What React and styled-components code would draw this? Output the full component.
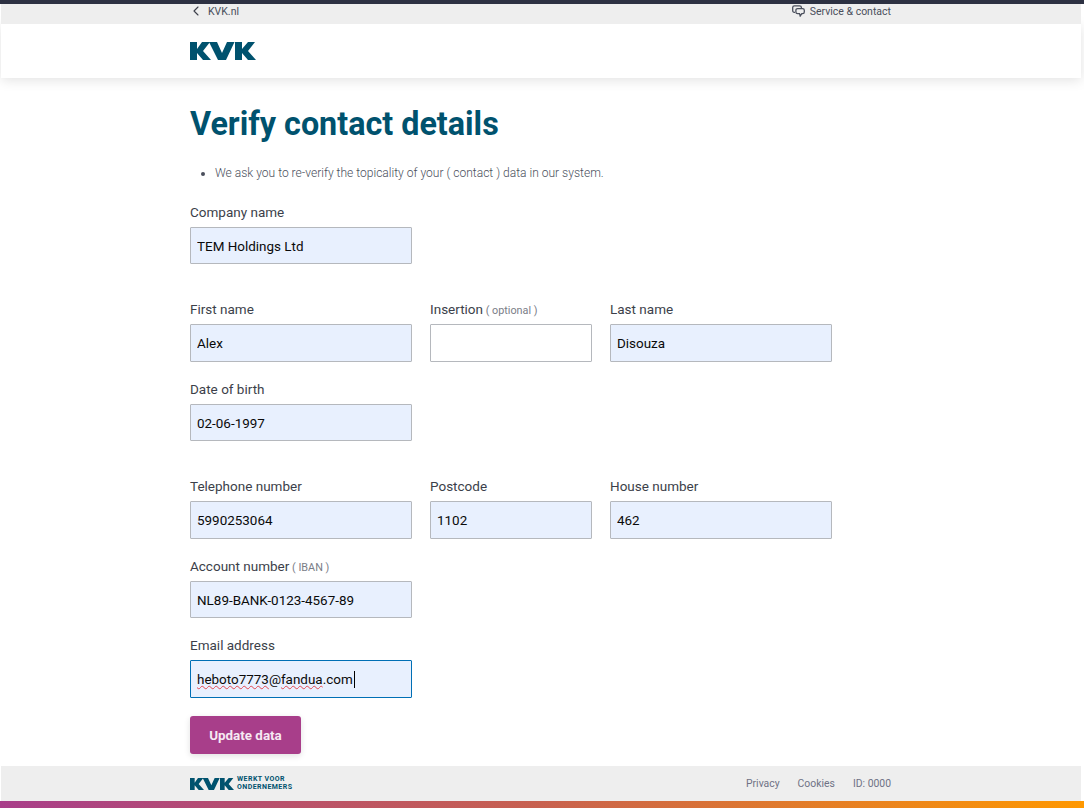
import React from 'react';
import styled, { createGlobalStyle } from 'styled-components';
import { ChevronLeft } from 'lucide-react';

const GlobalStyle = createGlobalStyle`
  html, body {
    margin: 0;
    padding: 0;
    height: 100%;
    background: #ffffff;
    font-family: Roboto, "Liberation Sans", sans-serif;
  }
  * {
    box-sizing: border-box;
  }
`;

const Page = styled.div`
  width: 1084px;
  height: 808px;
  overflow: hidden;
  display: flex;
  flex-direction: column;
  background: #ffffff;
`;

const DarkStrip = styled.div`
  height: 4px;
  background: #2d3142;
  flex: none;
`;

const Shell = styled.div`
  flex: 1;
  width: 1080px;
  margin-left: 1px;
  display: flex;
  flex-direction: column;
  min-height: 0;
`;

const Container = styled.div`
  width: 702px;
  margin: 0 auto;
  display: flex;
  align-items: center;
  justify-content: space-between;
`;

const TopBar = styled.div`
  height: 20px;
  background: #eeeeee;
  flex: none;
  position: relative;
  z-index: 1;
`;

const TopLink = styled.a`
  display: flex;
  align-items: center;
  height: 14px;
  font-size: 10.5px;
  color: #4a4f5c;
  text-decoration: none;
`;

const BackLink = styled(TopLink)`
  gap: 4px;
`;

const BackIcon = styled(ChevronLeft)`
  margin-left: -2px;
`;

const ServiceLink = styled(TopLink)`
  gap: 5px;
  margin-right: 1px;
`;

const Header = styled.header`
  height: 54px;
  background: #ffffff;
  flex: none;
  display: flex;
  align-items: center;
  box-shadow: 0 2px 12px rgba(0, 0, 0, 0.12);
`;

const Main = styled.main`
  flex: 1;
  min-height: 0;
`;

const Content = styled.div`
  width: 702px;
  margin: 0 auto;
  padding-top: 25px;
`;

const Title = styled.h1`
  margin: 0;
  font-family: Roboto, sans-serif;
  font-size: 32.3px;
  line-height: 42px;
  font-weight: 700;
  color: #00526e;
`;

const Notes = styled.ul`
  margin: 18px 0 0;
  padding: 0 0 0 25px;
  font-size: 12.05px;
  line-height: 20px;
  font-weight: 300;
  color: #4a4f5c;
`;

const Form = styled.form`
  margin-top: 21.8px;
  display: flex;
  flex-direction: column;
`;

const Group = styled.div`
  display: flex;
  flex-direction: column;
  gap: 20.1px;
  margin-bottom: ${props => (props.$last ? '18px' : '37.9px')};
`;

const Row = styled.div`
  display: grid;
  grid-template-columns: 222px 162px 222px;
  column-gap: 18px;
`;

const Field = styled.div`
  display: flex;
  flex-direction: column;
`;

const Label = styled.label`
  height: 22px;
  line-height: 14px;
  font-size: 13.5px;
  color: #3c3f4a;
`;

const Hint = styled.span`
  font-size: 10.8px;
  color: #7a7d87;
`;

const Input = styled.input`
  width: 100%;
  height: 37.5px;
  padding: 1px 6px 0;
  font-family: Roboto, sans-serif;
  font-size: 13.45px;
  color: #0a0a0a;
  background: ${props => (props.$filled ? '#e8f0fe' : '#ffffff')};
  border: 1px solid #b5b8bd;
  border-radius: 1px;
  outline: none;
`;

const FocusedInput = styled.div`
  width: 100%;
  height: 37.5px;
  padding: 1px 6px 0;
  display: flex;
  align-items: center;
  font-size: 13.45px;
  color: #0a0a0a;
  background: #e8f0fe;
  border: 1px solid #006fb5;
  border-radius: 1px;
`;

const Misspelled = styled.span`
  text-decoration: underline wavy #e2474f 1px;
  text-underline-offset: 1px;
`;

const Caret = styled.span`
  width: 1px;
  height: 17px;
  margin-left: 1px;
  background: #000000;
`;

const SubmitButton = styled.button`
  align-self: flex-start;
  width: 111px;
  height: 38px;
  padding: 1px 0 0;
  border: 0;
  border-radius: 3px;
  background: #a83e8a;
  color: #f6eaf3;
  font-family: Roboto, sans-serif;
  font-size: 13.4px;
  font-weight: 700;
  box-shadow: 0 2px 6px rgba(0, 0, 0, 0.12);
`;

const Footer = styled.footer`
  height: 35px;
  flex: none;
  background: #eeeeee;
  display: flex;
  align-items: center;
`;

const FooterBrand = styled.div`
  display: flex;
  align-items: center;
  gap: 3px;
`;

const FooterSlogan = styled.div`
  font-size: 7px;
  line-height: 7.5px;
  font-weight: 700;
  letter-spacing: 0.45px;
  color: #00526e;
`;

const FooterLinks = styled.div`
  display: flex;
  gap: 18px;
  margin-right: 1px;
  font-size: 10.4px;
  color: #6f7285;
`;

const GradientBar = styled.div`
  height: 7px;
  flex: none;
  background: linear-gradient(90deg, #a83e8a 0%, #c8614f 50%, #ff9800 100%);
`;

const KvkLogo = ({ width, height }) => (
  <svg width={width} height={height} viewBox="0 0 66 18" fill="#00526e">
    <path d="M0 0h7v7l5-7h8l-7 9 8 9h-8l-6-7v7H0z" />
    <path d="M19 0h8l5 11 5-11h7.5L36 18h-8z" />
    <path d="M45 0h7v7l6-7h7l-7 9 8 9h-8l-6-7v7h-7z" />
  </svg>
);

const ServiceIcon = () => (
  <svg width="13" height="12" viewBox="0 0 13 12" fill="none" stroke="#4a4f5c" strokeWidth="1.3">
    <path d="M3 7.4H2.4C1.3 7.4.7 6.6.7 5.6V2.6C.7 1.5 1.4.8 2.4.8h5.2c1 0 1.8.7 1.8 1.8v.7" />
    <path d="M5.6 3.6h5c1 0 1.7.7 1.7 1.7v1.6c0 1-.7 1.7-1.7 1.7h-.8L8.2 11 7.5 8.6H5.6c-1 0-1.7-.7-1.7-1.7V5.3c0-1 .7-1.7 1.7-1.7z" />
  </svg>
);

const TextField = ({ label, hint, value }) => (
  <Field>
    <Label>
      {label}
      {hint && <Hint> ( {hint} )</Hint>}
    </Label>
    <Input defaultValue={value} $filled={Boolean(value)} />
  </Field>
);

export default function App() {
  return (
    <Page>
      <GlobalStyle />
      <DarkStrip />
      <Shell>
        <TopBar>
          <Container>
            <BackLink href="#">
              <BackIcon size={16} color="#3c3f4a" strokeWidth={1.6} />
              KVK.nl
            </BackLink>
            <ServiceLink href="#">
              <ServiceIcon />
              Service &amp; contact
            </ServiceLink>
          </Container>
        </TopBar>
        <Header>
          <Container>
            <KvkLogo width={66} height={18} />
          </Container>
        </Header>
        <Main>
          <Content>
            <Title>Verify contact details</Title>
            <Notes>
              <li>We ask you to re-verify the topicality of your ( contact ) data in our system.</li>
            </Notes>
            <Form>
              <Group>
                <Row>
                  <TextField label="Company name" value="TEM Holdings Ltd" />
                </Row>
              </Group>
              <Group>
                <Row>
                  <TextField label="First name" value="Alex" />
                  <TextField label="Insertion" hint="optional" />
                  <TextField label="Last name" value="Disouza" />
                </Row>
                <Row>
                  <TextField label="Date of birth" value="02-06-1997" />
                </Row>
              </Group>
              <Group $last>
                <Row>
                  <TextField label="Telephone number" value="5990253064" />
                  <TextField label="Postcode" value="1102" />
                  <TextField label="House number" value="462" />
                </Row>
                <Row>
                  <TextField label="Account number" hint="IBAN" value="NL89-BANK-0123-4567-89" />
                </Row>
                <Row>
                  <Field>
                    <Label>Email address</Label>
                    <FocusedInput>
                      <Misspelled>heboto7773</Misspelled>@<Misspelled>fandua</Misspelled>.com
                      <Caret />
                    </FocusedInput>
                  </Field>
                </Row>
              </Group>
              <SubmitButton type="button">Update data</SubmitButton>
            </Form>
          </Content>
        </Main>
        <Footer>
          <Container>
            <FooterBrand>
              <KvkLogo width={44} height={12} />
              <FooterSlogan>
                WERKT VOOR
                <br />
                ONDERNEMERS
              </FooterSlogan>
            </FooterBrand>
            <FooterLinks>
              <span>Privacy</span>
              <span>Cookies</span>
              <span>ID: 0000</span>
            </FooterLinks>
          </Container>
        </Footer>
      </Shell>
      <GradientBar />
    </Page>
  );
}
